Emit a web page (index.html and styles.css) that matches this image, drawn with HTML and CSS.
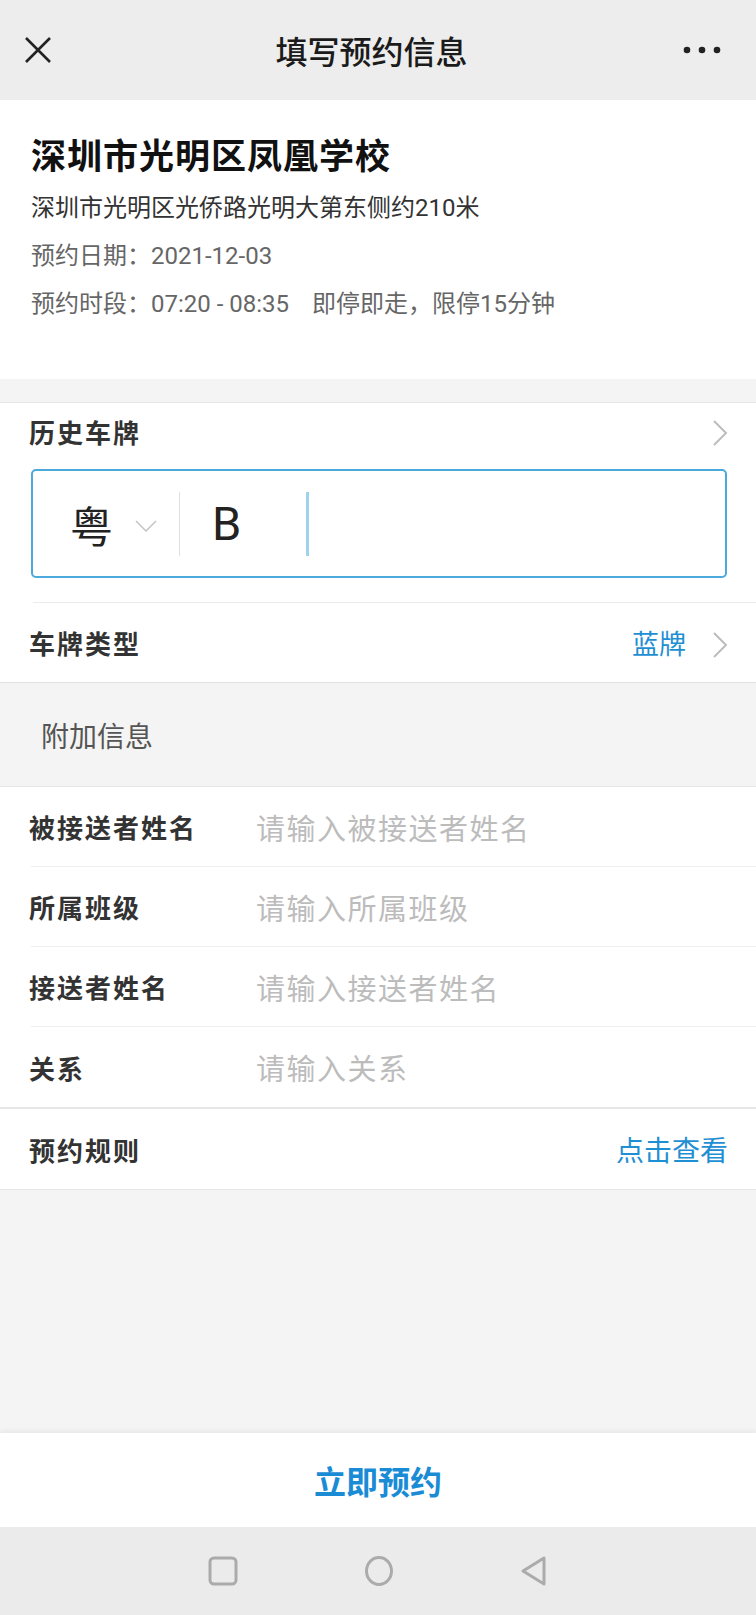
FILE: index.html
```html
<!DOCTYPE html>
<html>
  <head>
    <meta charset="utf-8">
    <title>填写预约信息</title>
    <link rel="stylesheet" href="styles.css">
  </head>
  <body>
    <div class="page">
      <div class="topbar">
        <svg class="close" width="28" height="28" viewBox="0 0 28 28">
          <path d="M2 2 L26 26 M26 2 L2 26" stroke="#222" stroke-width="2.6" fill="none"/>
        </svg>
        <div class="title">填写预约信息</div>
        <svg class="more" width="38" height="8" viewBox="0 0 38 8">
          <circle cx="4" cy="4" r="3.3" fill="#222"/>
          <circle cx="19" cy="4" r="3.3" fill="#222"/>
          <circle cx="34" cy="4" r="3.3" fill="#222"/>
        </svg>
      </div>

      <div class="info">
        <h1 class="school">深圳市光明区凤凰学校</h1>
        <p class="addr">深圳市光明区光侨路光明大第东侧约210米</p>
        <p class="meta">预约日期：2021-12-03</p>
        <p class="meta">预约时段：07:20 - 08:35<span class="note">即停即走，限停15分钟</span></p>
      </div>

      <div class="plate">
        <div class="row head">
          <span class="label">历史车牌</span>
          <svg class="arrow" width="16" height="28" viewBox="0 0 16 28"><path d="M2 2 L14 14 L2 26" stroke="#bdbdbd" stroke-width="2" fill="none"/></svg>
        </div>
        <div class="plate-box">
          <span class="prov">粤</span>
          <svg class="down" width="22" height="12" viewBox="0 0 22 12"><path d="M1 1 L11 11 L21 1" stroke="#c4c4c4" stroke-width="1.5" fill="none"/></svg>
          <span class="divider"></span>
          <span class="letter">B</span>
          <span class="cursor"></span>
        </div>
        <div class="row type">
          <span class="label">车牌类型</span>
          <span class="value">蓝牌</span>
          <svg class="arrow" width="16" height="28" viewBox="0 0 16 28"><path d="M2 2 L14 14 L2 26" stroke="#bdbdbd" stroke-width="2" fill="none"/></svg>
        </div>
      </div>

      <div class="section-title">附加信息</div>

      <div class="form">
        <div class="field"><span class="label">被接送者姓名</span><span class="hint">请输入被接送者姓名</span></div>
        <div class="field"><span class="label">所属班级</span><span class="hint">请输入所属班级</span></div>
        <div class="field"><span class="label">接送者姓名</span><span class="hint">请输入接送者姓名</span></div>
        <div class="field"><span class="label">关系</span><span class="hint">请输入关系</span></div>
      </div>

      <div class="rules">
        <span class="label">预约规则</span>
        <span class="value">点击查看</span>
      </div>

      <div class="filler"></div>

      <div class="submit">立即预约</div>

      <div class="sysbar">
        <svg width="30" height="30" viewBox="0 0 30 30"><rect x="2" y="2" width="26" height="26" rx="4" stroke="#ababab" stroke-width="3" fill="none"/></svg>
        <svg width="30" height="32" viewBox="0 0 30 32"><ellipse cx="15" cy="16" rx="12.5" ry="13.5" stroke="#ababab" stroke-width="3" fill="none"/></svg>
        <svg width="28" height="32" viewBox="0 0 28 32"><path d="M24 3 L24 29 L3 16 Z" stroke="#ababab" stroke-width="3" stroke-linejoin="round" fill="none"/></svg>
      </div>
    </div>
  </body>
</html>
```

FILE: styles.css
```css
*{
  box-sizing: border-box;
}
body{
  margin: 0;
  background-color: #f4f4f4;
  font-family: Roboto, "Noto Sans CJK SC", sans-serif;
  color: #333;
}
.page{
  height: 1615px;
  display: flex;
  flex-direction: column;
  overflow: hidden;
}
.topbar{
  height: 100px;
  flex-shrink: 0;
  background-color: #ededed;
  display: flex;
  align-items: center;
  justify-content: space-between;
  padding: 0 35px 0 24px;
}
.title{
  font-size: 32px;
  font-weight: 500;
  color: #1b1b1b;
  margin-left: 8px;
}
.info{
  background-color: #fff;
  padding: 36px 31px 58px;
}
.school{
  margin: 0;
  font-size: 35px;
  letter-spacing: 1px;
  line-height: 44px;
  font-weight: 700;
  color: #111;
}
.addr{
  margin: 11px 0 0;
  font-size: 24px;
  line-height: 34px;
  color: #333;
}
.meta{
  margin: 14px 0 0;
  font-size: 24px;
  line-height: 34px;
  color: #666;
}
.note{
  margin-left: 23px;
}
.plate{
  margin-top: 23px;
  background-color: #fff;
  border-top: 1px solid #e6e6e6;
  border-bottom: 1px solid #e2e2e2;
}
.row{
  display: flex;
  align-items: center;
  padding: 0 28px 0 29px;
}
.label{
  font-size: 26px;
  letter-spacing: 2px;
  font-weight: 600;
  color: #333;
}
.row .label{
  flex: 1;
}
.head{
  height: 66px;
  padding-bottom: 10px;
}
.arrow{
  margin-top: 4px;
}
.plate-box{
  margin: 0 29px 0 31px;
  height: 109px;
  border: 2px solid #4ba9db;
  border-radius: 5px;
  display: flex;
  align-items: center;
  padding-left: 37px;
}
.prov{
  font-size: 43px;
  color: #222;
}
.down{
  margin-left: 22px;
  margin-top: 4px;
}
.divider{
  width: 1px;
  height: 64px;
  background-color: #e0e0e0;
  margin-left: 22px;
}
.letter{
  font-size: 47px;
  color: #222;
  margin-left: 32px;
}
.cursor{
  width: 3px;
  height: 64px;
  background-color: #9fd2ee;
  margin-left: 65px;
}
.type{
  margin-top: 24px;
  margin-left: 33px;
  padding-left: 0;
  height: 80px;
  border-top: 1px solid #ececec;
}
.type .label{
  margin-left: -4px;
}
.value{
  font-size: 27px;
  color: #1f8fd3;
}
.type .value{
  margin-right: 26px;
}
.section-title{
  height: 104px;
  display: flex;
  align-items: center;
  padding-left: 41px;
  font-size: 28px;
  color: #555;
  border-bottom: 1px solid #e6e6e6;
}
.form{
  background-color: #fff;
  border-bottom: 2px solid #e6e6e6;
}
.field{
  height: 80px;
  display: flex;
  align-items: center;
  margin-left: 31px;
  border-bottom: 1px solid #efefef;
}
.field:last-child{
  border-bottom: none;
}
.field .label{
  width: 227px;
  margin-left: -2px;
}
.hint{
  font-size: 29px;
  letter-spacing: 1.5px;
  color: #bcbcbc;
}
.rules{
  height: 81px;
  background-color: #fff;
  border-bottom: 1px solid #e6e6e6;
  display: flex;
  align-items: center;
  justify-content: space-between;
  padding: 0 28px 0 29px;
}
.rules .value{
  font-size: 28px;
}
.filler{
  flex: 1;
}
.submit{
  height: 94px;
  flex-shrink: 0;
  background-color: #fff;
  box-shadow: 0 -2px 5px rgba(0,0,0,0.06);
  display: flex;
  align-items: center;
  justify-content: center;
  font-size: 32px;
  font-weight: 700;
  color: #1a8cd5;
}
.sysbar{
  height: 88px;
  flex-shrink: 0;
  background-color: #ebebeb;
  display: flex;
  align-items: center;
  justify-content: center;
  gap: 126px;
}
```
